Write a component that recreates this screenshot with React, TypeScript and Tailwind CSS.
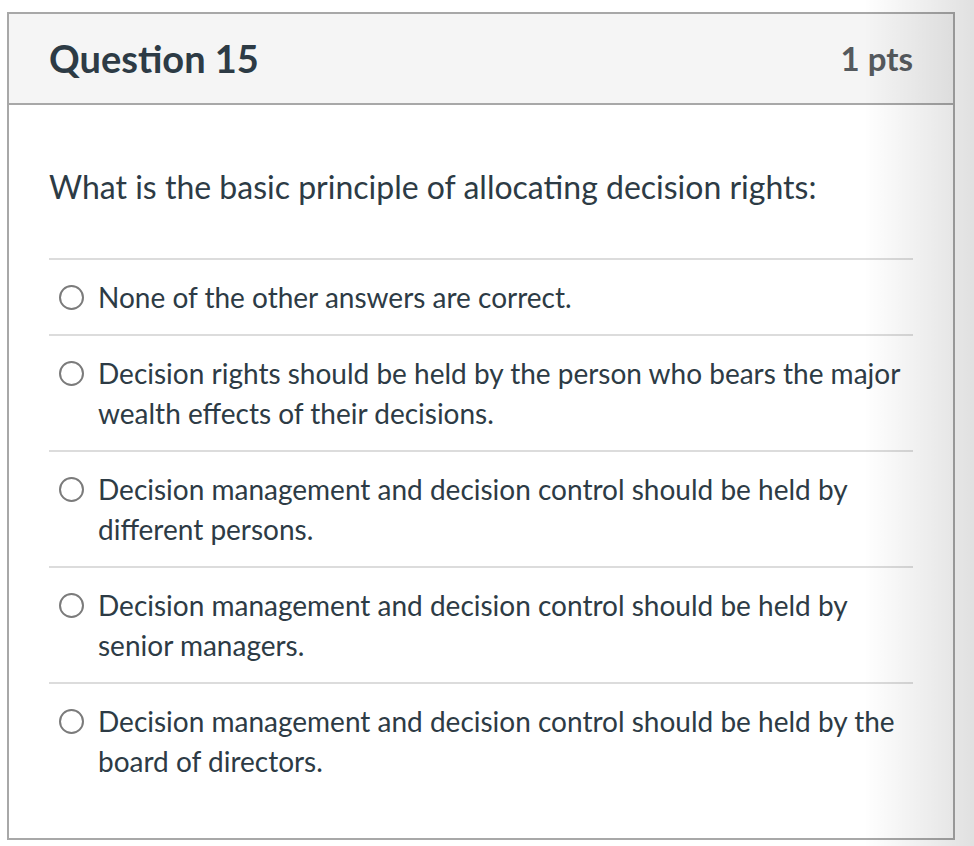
const answers = [
  "None of the other answers are correct.",
  "Decision rights should be held by the person who bears the major wealth effects of their decisions.",
  "Decision management and decision control should be held by different persons.",
  "Decision management and decision control should be held by senior managers.",
  "Decision management and decision control should be held by the board of directors.",
];

const Radio = () => (
  <span className="mt-[8px] h-[25px] w-[25px] shrink-0 rounded-full border-[2px] border-[#7b7b7b] bg-white" />
);

export default function App() {
  return (
    <div
      className="relative h-[846px] w-[974px] overflow-hidden bg-white pl-[7px] pt-[12px]"
      style={{ fontFamily: "Lato, 'Open Sans', sans-serif" }}
    >
      <div className="flex h-[828px] w-[948px] flex-col border-[2px] border-[#a8a8a8] bg-white">
        <div className="flex h-[91px] items-center justify-between border-b-[2px] border-[#a8a8a8] bg-[#f5f5f5] px-[40px]">
          <h2 className="text-[38px] font-bold text-[#2d3b45]">Question 15</h2>
          <span className="text-[33px] font-bold text-[#555a5e]">1 pts</span>
        </div>
        <div className="px-[40px] pt-[62px]">
          <p className="text-[32px] leading-[40px] text-[#2d3b45]">
            What is the basic principle of allocating decision rights:
          </p>
          <div className="mt-[51px] border-t-[2px] border-[#dcdcdc]">
            {answers.map((a) => (
              <label
                key={a}
                className="flex gap-[14px] border-b-[2px] border-[#dcdcdc] py-[17px] pl-[10px] last:border-b-0"
              >
                <Radio />
                <span className="text-[28px] leading-[40px] text-[#2d3b45]">{a}</span>
              </label>
            ))}
          </div>
        </div>
      </div>
      {/* soft shade along the right edge */}
      <div className="pointer-events-none absolute right-0 top-0 h-full w-[110px] bg-gradient-to-r from-transparent to-black/12" />
    </div>
  );
}
